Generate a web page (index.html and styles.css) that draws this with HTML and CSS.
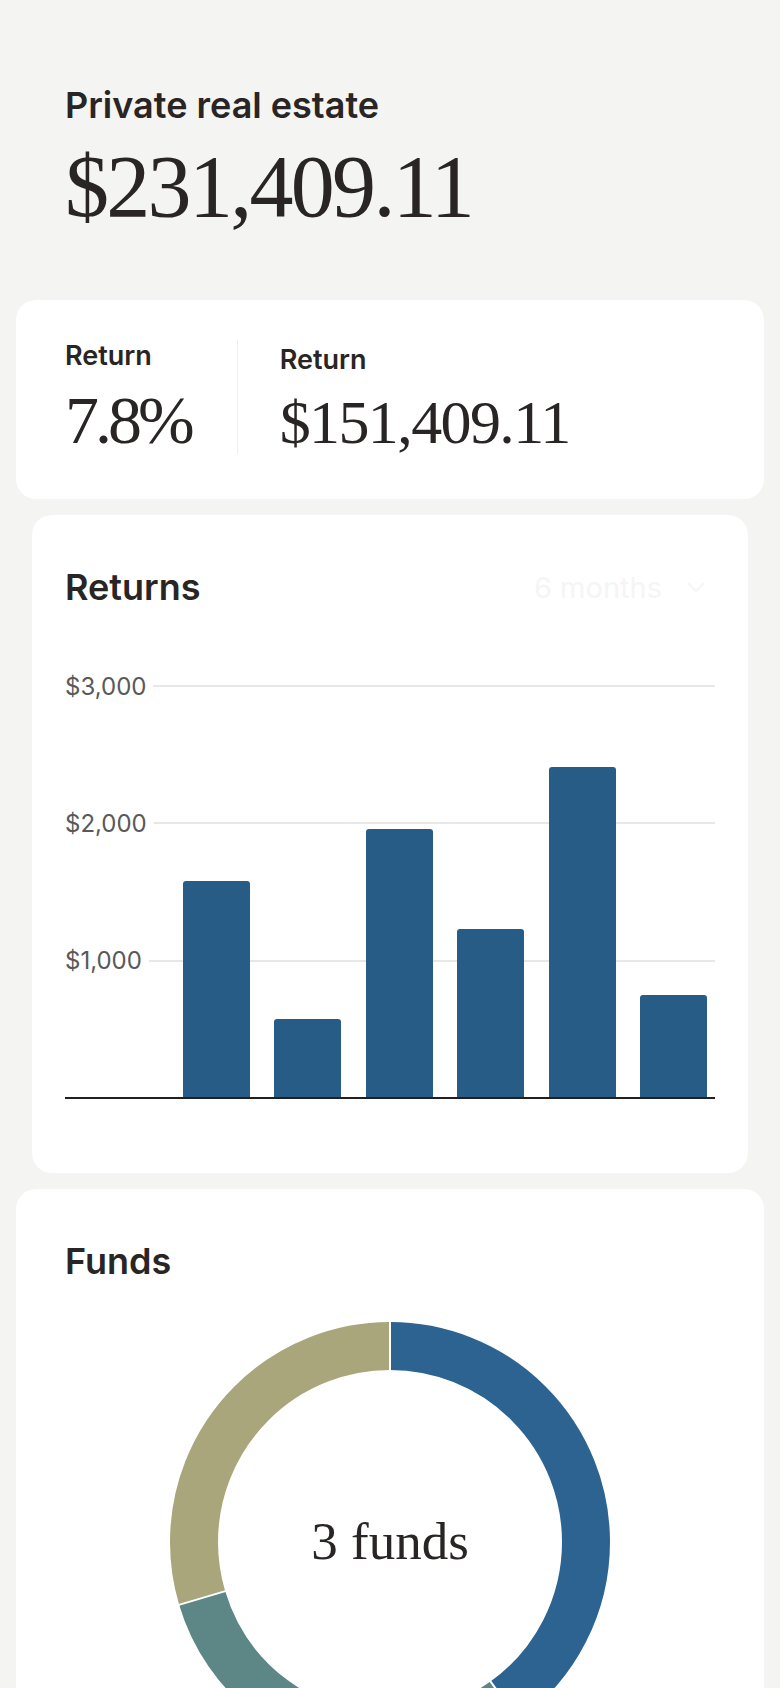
FILE: index.html
```html
<!DOCTYPE html>
<html lang="en">
<head>
    <meta charset="UTF-8">
    <meta name="viewport" content="width=device-width, initial-scale=1.0">
    <title>Private real estate</title>
    <link rel="stylesheet" href="styles.css">
</head>
<body>
    <header class="summary">
        <h1 class="summary-title">Private real estate</h1>
        <div class="summary-value">$231,409.11</div>
    </header>

    <section class="card stats">
        <div class="stat stat-rate">
            <div class="stat-label">Return</div>
            <div class="stat-value">7.8%</div>
        </div>
        <div class="stat stat-amount">
            <div class="stat-label">Return</div>
            <div class="stat-value">$151,409.11</div>
        </div>
    </section>

    <section class="card card-inset returns">
        <div class="card-head">
            <h2 class="card-title">Returns</h2>
            <button class="range">
                <span>6 months</span>
                <svg width="20" height="12" viewBox="0 0 20 12"><path d="M2 2l8 8 8-8" fill="none" stroke="currentColor" stroke-width="2"/></svg>
            </button>
        </div>

        <div class="plot">
            <div class="ticks">
                <div class="tick"><span class="tick-label">$3,000</span><span class="tick-line"></span></div>
                <div class="tick"><span class="tick-label">$2,000</span><span class="tick-line"></span></div>
                <div class="tick"><span class="tick-label">$1,000</span><span class="tick-line"></span></div>
            </div>
            <div class="axis"></div>
            <div class="bars">
                <div class="bar" style="height: 216px"></div>
                <div class="bar" style="height: 78px"></div>
                <div class="bar" style="height: 268px"></div>
                <div class="bar" style="height: 168px"></div>
                <div class="bar" style="height: 330px"></div>
                <div class="bar" style="height: 102px"></div>
            </div>
        </div>
    </section>

    <section class="card funds">
        <h2 class="card-title">Funds</h2>
        <div class="donut">
            <svg width="440" height="440" viewBox="0 0 440 440">
                <g transform="rotate(-90 220 220)" fill="none" stroke-width="48">
                    <circle cx="220" cy="220" r="196" stroke="#2c6390" stroke-dasharray="493.28 1231.5"/>
                    <circle cx="220" cy="220" r="196" stroke="#5d8787" stroke-dasharray="373.55 1231.5" stroke-dashoffset="-493.28"/>
                    <circle cx="220" cy="220" r="196" stroke="#a9a67b" stroke-dasharray="364.67 1231.5" stroke-dashoffset="-866.83"/>
                </g>
                <g stroke="#fff" stroke-width="2">
                    <line x1="220" y1="-2" x2="220" y2="50"/>
                    <line x1="319.4" y1="357.9" x2="349.9" y2="400.1"/>
                    <line x1="57.1" y1="268.6" x2="7.3" y2="283.4"/>
                </g>
                <text class="donut-label" x="220" y="237" text-anchor="middle">3 funds</text>
            </svg>
        </div>
    </section>
</body>
</html>
```

FILE: styles.css
```css
body {
    margin: 0;
    background-color: #f4f4f2;
    color: #292524;
    font-family: Inter, "Liberation Sans", sans-serif;
}
h1, h2 {
    margin: 0;
}

.summary {
    padding: 84px 65px 0;
    height: 284px;
    box-sizing: border-box;
}
.summary-title {
    font-size: 36px;
    line-height: 42px;
    font-weight: 600;
}
.summary-value {
    margin-top: 17px;
    font-family: "Liberation Serif", serif;
    font-size: 88px;
    line-height: 88px;
    letter-spacing: -2.7px;
}

.card {
    background-color: #fff;
    border-radius: 20px;
    margin: 16px 16px 0;
}
.card-inset {
    margin-left: 32px;
    margin-right: 32px;
}

.stats {
    display: flex;
    padding: 40px 49px 45px;
}
.stat-label {
    font-size: 27px;
    line-height: 32px;
    font-weight: 600;
}
.stat-value {
    font-family: "Liberation Serif", serif;
}
.stat-rate {
    padding-right: 46px;
    border-right: 1px solid #efefef;
}
.stat-rate .stat-value {
    margin-top: 14px;
    font-size: 68px;
    line-height: 68px;
    letter-spacing: -4px;
}
.stat-amount {
    padding: 4px 0 0 42px;
}
.stat-amount .stat-value {
    margin-top: 15px;
    font-size: 62px;
    line-height: 62px;
    letter-spacing: -1.6px;
}

.card-title {
    font-size: 36px;
    line-height: 40px;
    font-weight: 600;
}

.returns {
    padding: 52px 33px 74px;
}
.card-head {
    display: flex;
    justify-content: space-between;
    align-items: center;
}
.range {
    display: flex;
    align-items: center;
    gap: 24px;
    margin-right: 9px;
    padding: 0;
    border: none;
    background: none;
    color: #f5f5f5;
    font-family: Inter, sans-serif;
    font-size: 29px;
}

.plot {
    position: relative;
    margin-top: 68px;
}
.ticks {
    display: flex;
    flex-direction: column;
    gap: 115.33px;
    margin-bottom: 125.3px;
}
.tick {
    display: flex;
    align-items: center;
    gap: 7px;
    height: 22px;
}
.tick-label {
    font-size: 24px;
    color: #595959;
}
.tick-line {
    flex: 1;
    height: 2px;
    background-color: #e7e7e7;
}
.axis {
    height: 2px;
    background-color: #231f1e;
}
.bars {
    position: absolute;
    left: 118px;
    right: 8px;
    bottom: 2px;
    display: flex;
    align-items: flex-end;
    justify-content: space-between;
}
.bar {
    width: 67px;
    background-color: #275c86;
    border-radius: 3px 3px 0 0;
}

.funds {
    padding: 52px 49px 0;
    height: 600px;
}
.donut {
    display: flex;
    justify-content: center;
    margin-top: 41px;
}
.donut svg {
    overflow: visible;
}
.donut-label {
    font-family: "Liberation Serif", serif;
    font-size: 53px;
    fill: #292524;
}
```
